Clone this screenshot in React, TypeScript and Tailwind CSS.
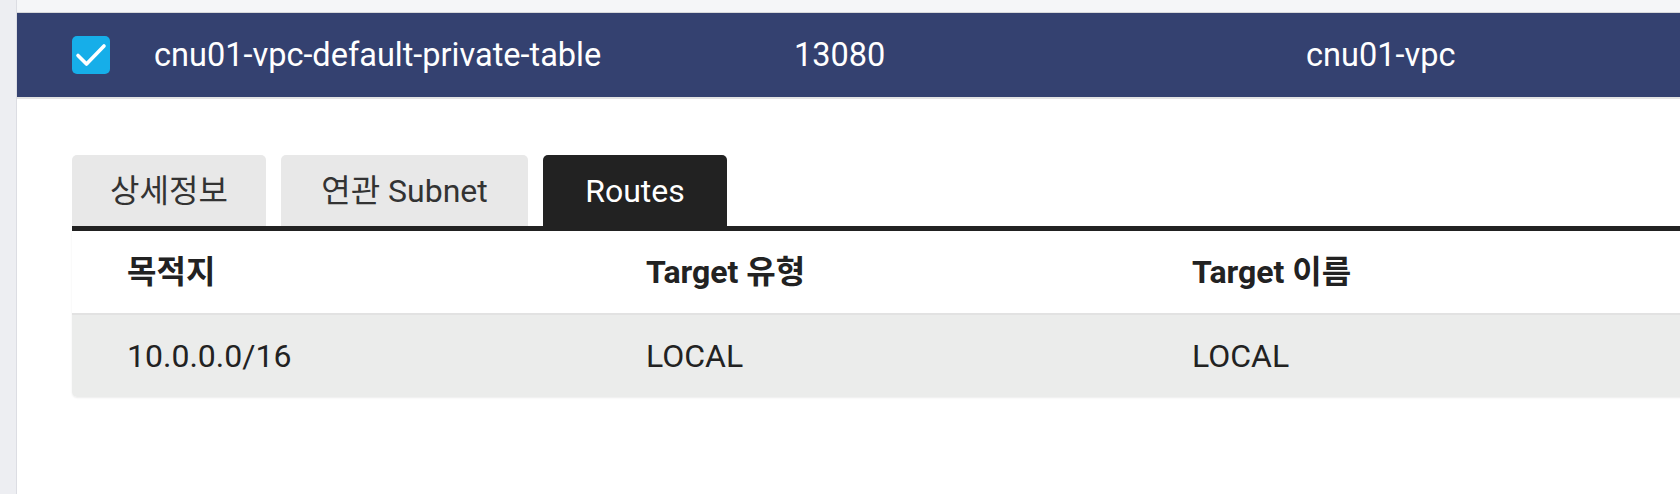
import React from "react";

const font = "font-['Roboto','Noto_Sans_CJK_KR',sans-serif]";

function CheckBox() {
    return (
        <div className="flex h-[38px] w-[38px] items-center justify-center rounded-[5px] bg-[#16aee9]">
            <svg width="38" height="38" viewBox="0 0 38 38" fill="none">
                <path
                    d="M6 19.5 L14.5 28 L32 10"
                    stroke="white"
                    strokeWidth="3.6"
                    strokeLinecap="round"
                    strokeLinejoin="round"
                />
            </svg>
        </div>
    );
}

const tabs = [
    { label: "상세정보", width: "w-[194px]", active: false },
    { label: "연관 Subnet", width: "w-[247px]", active: false },
    { label: "Routes", width: "w-[184px]", active: true },
];

export default function App() {
    return (
        <div className={`flex h-[494px] w-[1680px] overflow-hidden bg-white ${font}`}>
            <div className="w-[17px] shrink-0 border-r border-[#dcdde3] bg-[#edeef2]" />

            <div className="min-w-0 flex-1">
                <div className="h-[13px] border-b border-[#d6d7da] bg-[#f5f6f8]" />

                <div className="flex h-[86px] items-center border-b-2 border-[#e3e3e3] bg-[#344170] text-[32.5px] text-white">
                    <div className="w-[137px] shrink-0 pl-[55px]">
                        <CheckBox />
                    </div>
                    <div className="w-[640px] shrink-0">
                        cnu01-vpc-default-private-table
                    </div>
                    <div className="w-[512px] shrink-0">13080</div>
                    <div>cnu01-vpc</div>
                </div>

                <div className="-mr-[10px] ml-[55px] mt-[56px]">
                    <div className="flex gap-[15px] border-b-[5px] border-[#222222]">
                        {tabs.map((tab) => (
                            <div
                                key={tab.label}
                                className={`flex h-[71px] items-center justify-center rounded-t-[5px] text-[32px] ${tab.width} ${
                                    tab.active
                                        ? "bg-[#222222] text-white"
                                        : "bg-[#e8e8e8] text-[#333333]"
                                }`}
                            >
                                {tab.label}
                            </div>
                        ))}
                    </div>

                    <div className="rounded-b-[5px] shadow-[0_1px_2px_rgba(0,0,0,0.08)]">
                        <div className="grid h-[84px] grid-cols-[519px_546px_1fr] items-center border-b-2 border-[#e2e2e2] bg-white text-[32px] font-bold text-[#222222]">
                            <div className="pl-[55px]">목적지</div>
                            <div className="pl-[55px]">Target 유형</div>
                            <div className="pl-[55px]">Target 이름</div>
                        </div>
                        <div className="grid h-[82px] grid-cols-[519px_546px_1fr] items-center rounded-b-[5px] bg-[#ebeceb] text-[32px] text-[#222222]">
                            <div className="pl-[55px]">10.0.0.0/16</div>
                            <div className="pl-[55px]">LOCAL</div>
                            <div className="pl-[55px]">LOCAL</div>
                        </div>
                    </div>
                </div>
            </div>
        </div>
    );
}
